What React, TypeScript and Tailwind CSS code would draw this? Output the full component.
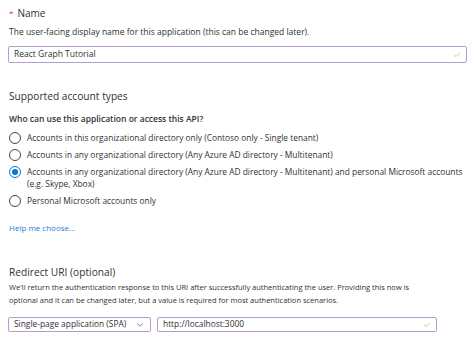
import { Check, ChevronDown } from 'lucide-react';

const options = [
  ['Accounts in this organizational directory only (Contoso only - Single tenant)'],
  ['Accounts in any organizational directory (Any Azure AD directory - Multitenant)'],
  [
    'Accounts in any organizational directory (Any Azure AD directory - Multitenant) and personal Microsoft accounts',
    '(e.g. Skype, Xbox)',
  ],
  ['Personal Microsoft accounts only'],
];

export default function App() {
  const selected = 2;

  return (
    <div className="w-[474px] h-[351px] overflow-hidden bg-white px-[8px] text-[#323130] font-['Open_Sans',sans-serif]">
      {/* Name */}
      <div className="mt-[5px] ml-[1px] flex items-center h-[16px] text-[10px] leading-[16px]">
        <span className="text-[#d13438] text-[8px] mr-[4px] -mt-[1px]">*</span>
        Name
      </div>
      <p className="mt-[5px] ml-[1px] text-[8.5px] leading-[12px]">
        The user-facing display name for this application (this can be changed later).
      </p>
      <div className="mt-[8px] w-[459px] h-[17px] border border-[#b99ccd] rounded-[2px] flex items-center justify-between px-[5px] text-[8.5px]">
        <span>React Graph Tutorial</span>
        <Check className="w-[8px] h-[8px] text-[#8cc06f]" strokeWidth={2} />
      </div>

      {/* Supported account types */}
      <h2 className="mt-[25px] ml-[1px] text-[10.2px] leading-[16px]">Supported account types</h2>
      <p className="mt-[9px] ml-[1px] text-[8.5px] leading-[12px] font-semibold">
        Who can use this application or access this API?
      </p>
      <div className="mt-[7px] ml-[1px] flex flex-col gap-[5px]">
        {options.map((lines, i) => (
          <div key={i} className="flex items-start gap-[6px] text-[8.4px] leading-[12px]">
            <span
              className={
                'w-[12px] h-[12px] shrink-0 rounded-full border flex items-center justify-center ' +
                (i === selected ? 'border-[#0078d4]' : 'border-[#484644]')
              }
            >
              {i === selected && <span className="w-[6px] h-[6px] rounded-full bg-[#0078d4]" />}
            </span>
            <div className="flex flex-col">
              {lines.map((l) => (
                <span key={l} className="whitespace-nowrap">{l}</span>
              ))}
            </div>
          </div>
        ))}
      </div>
      <a className="block mt-[15px] ml-[1px] text-[8px] leading-[12px] text-[#2b7cd3]">Help me choose...</a>

      {/* Redirect URI */}
      <h2 className="mt-[30px] ml-[1px] text-[10.2px] leading-[16px]">Redirect URI (optional)</h2>
      <p className="mt-[1px] ml-[1px] text-[7.5px] leading-[13px] whitespace-nowrap">
        We'll return the authentication response to this URI after successfully authenticating the user. Providing this now is
        <br />
        optional and it can be changed later, but a value is required for most authentication scenarios.
      </p>
      <div className="mt-[10px] flex gap-[6px]">
        <div className="w-[143px] h-[15px] border border-[#b99ccd] rounded-[2px] flex items-center justify-between pl-[5px] pr-[5px] text-[8.4px]">
          <span>Single-page application (SPA)</span>
          <ChevronDown className="w-[10px] h-[10px] text-[#323130]" strokeWidth={1.5} />
        </div>
        <div className="w-[280px] h-[15px] border border-[#b99ccd] rounded-[2px] flex items-center justify-between px-[5px] text-[8.4px]">
          <span>http://localhost:3000</span>
          <Check className="w-[8px] h-[8px] text-[#8cc06f]" strokeWidth={2} />
        </div>
      </div>
    </div>
  );
}
